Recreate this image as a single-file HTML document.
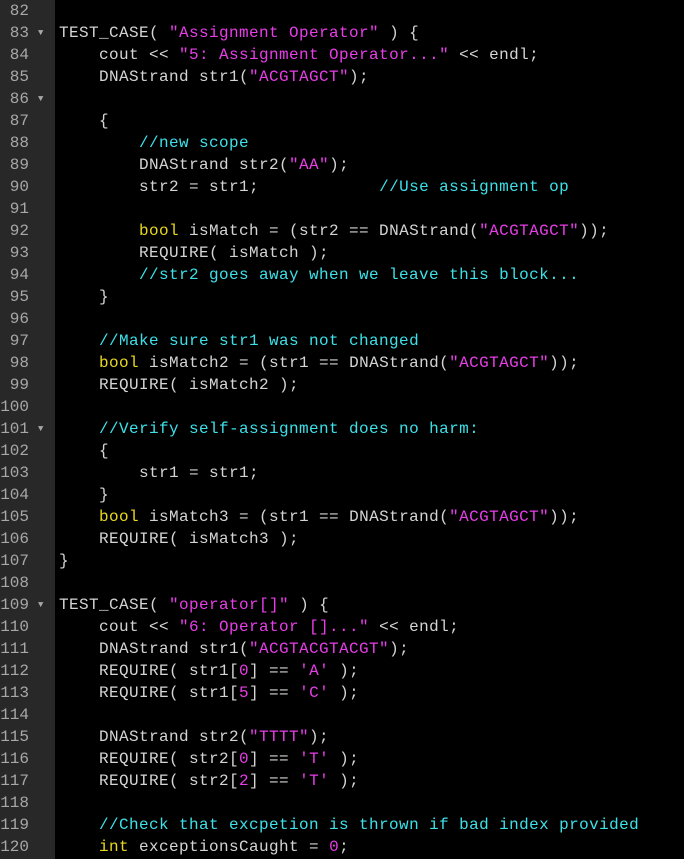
<!DOCTYPE html><html><head><style>
body{margin:0;width:684px;height:859px;overflow:hidden;background:#000;font-family:"Liberation Mono",monospace;font-size:16px;letter-spacing:0.4px}
#g{position:absolute;left:0;top:0;width:55px;height:859px;background:#282828}
.r{position:absolute;left:0;height:22px;line-height:22px;white-space:pre;width:684px}
.n{position:absolute;left:0;width:29px;text-align:right;color:#a8a8a8;letter-spacing:0}
.f{position:absolute;left:38px;color:#a8a8a8;font-size:9px}
.c{position:absolute;left:59px;color:#d4d4d4}
.s{color:#e83ee8}.k{color:#e8d820}.m{color:#3ee0e8}
</style></head><body><div id="g"></div>
<div id="L"></div>
<script>
var L=[
[82,0,''],
[83,1,'TEST_CASE( <span class=s>"Assignment Operator"</span> ) {'],
[84,0,'    cout &lt;&lt; <span class=s>"5: Assignment Operator..."</span> &lt;&lt; endl;'],
[85,0,'    DNAStrand str1(<span class=s>"ACGTAGCT"</span>);'],
[86,1,''],
[87,0,'    {'],
[88,0,'        <span class=m>//new scope</span>'],
[89,0,'        DNAStrand str2(<span class=s>"AA"</span>);'],
[90,0,'        str2 = str1;            <span class=m>//Use assignment op</span>'],
[91,0,''],
[92,0,'        <span class=k>bool</span> isMatch = (str2 == DNAStrand(<span class=s>"ACGTAGCT"</span>));'],
[93,0,'        REQUIRE( isMatch );'],
[94,0,'        <span class=m>//str2 goes away when we leave this block...</span>'],
[95,0,'    }'],
[96,0,''],
[97,0,'    <span class=m>//Make sure str1 was not changed</span>'],
[98,0,'    <span class=k>bool</span> isMatch2 = (str1 == DNAStrand(<span class=s>"ACGTAGCT"</span>));'],
[99,0,'    REQUIRE( isMatch2 );'],
[100,0,''],
[101,1,'    <span class=m>//Verify self-assignment does no harm:</span>'],
[102,0,'    {'],
[103,0,'        str1 = str1;'],
[104,0,'    }'],
[105,0,'    <span class=k>bool</span> isMatch3 = (str1 == DNAStrand(<span class=s>"ACGTAGCT"</span>));'],
[106,0,'    REQUIRE( isMatch3 );'],
[107,0,'}'],
[108,0,''],
[109,1,'TEST_CASE( <span class=s>"operator[]"</span> ) {'],
[110,0,'    cout &lt;&lt; <span class=s>"6: Operator []..."</span> &lt;&lt; endl;'],
[111,0,'    DNAStrand str1(<span class=s>"ACGTACGTACGT"</span>);'],
[112,0,'    REQUIRE( str1[<span class=s>0</span>] == <span class=s>\'A\'</span> );'],
[113,0,'    REQUIRE( str1[<span class=s>5</span>] == <span class=s>\'C\'</span> );'],
[114,0,''],
[115,0,'    DNAStrand str2(<span class=s>"TTTT"</span>);'],
[116,0,'    REQUIRE( str2[<span class=s>0</span>] == <span class=s>\'T\'</span> );'],
[117,0,'    REQUIRE( str2[<span class=s>2</span>] == <span class=s>\'T\'</span> );'],
[118,0,''],
[119,0,'    <span class=m>//Check that excpetion is thrown if bad index provided</span>'],
[120,0,'    <span class=k>int</span> exceptionsCaught = <span class=s>0</span>;']
];
var h='';L.forEach(function(l,i){h+='<div class=r style="top:'+(i*22)+'px"><span class=n>'+l[0]+'</span>'+(l[1]?'<span class=f>&#9660;</span>':'')+'<span class=c>'+l[2]+'</span></div>';});
document.getElementById('L').innerHTML=h;
</script></body></html>
